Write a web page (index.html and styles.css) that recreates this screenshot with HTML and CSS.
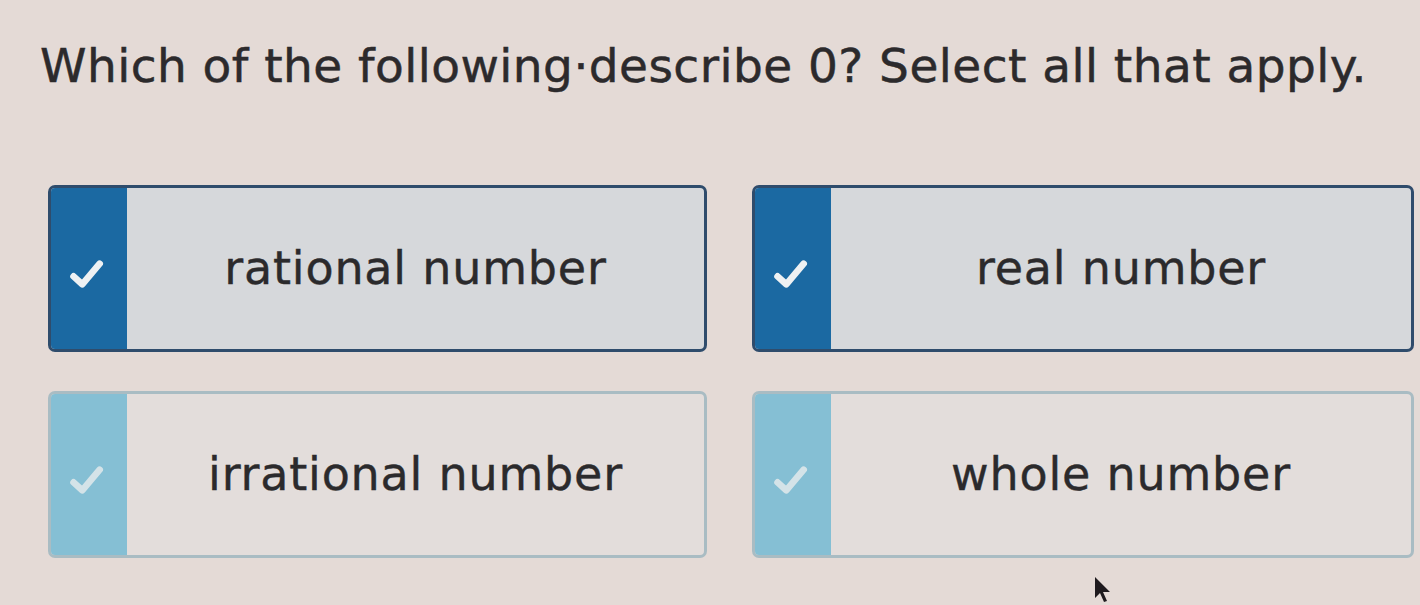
FILE: index.html
```html
<!DOCTYPE html>
<html lang="en">
<head>
<meta charset="utf-8">
<title>Select all that apply</title>
<link rel="stylesheet" href="styles.css">
</head>
<body>
<main class="page">
  <h1 class="question">Which of the following·describe 0? Select all that apply.</h1>
  <div class="options">
    <div class="option selected">
      <div class="mark"><svg viewBox="0 0 24 24" class="check"><path d="M3.5 13.5 L9 18.5 L20 5.5" /></svg></div>
      <div class="label">rational number</div>
    </div>
    <div class="option selected">
      <div class="mark"><svg viewBox="0 0 24 24" class="check"><path d="M3.5 13.5 L9 18.5 L20 5.5" /></svg></div>
      <div class="label">real number</div>
    </div>
    <div class="option">
      <div class="mark"><svg viewBox="0 0 24 24" class="check"><path d="M3.5 13.5 L9 18.5 L20 5.5" /></svg></div>
      <div class="label">irrational number</div>
    </div>
    <div class="option">
      <div class="mark"><svg viewBox="0 0 24 24" class="check"><path d="M3.5 13.5 L9 18.5 L20 5.5" /></svg></div>
      <div class="label">whole number</div>
    </div>
  </div>
  <svg class="cursor" viewBox="0 0 20 28"><path d="M1 1 L1 22 L6 17 L10 26 L13 25 L9 16 L16 16 Z" /></svg>
</main>
</body>
</html>
```
FILE: styles.css
```css
html, body {
  margin: 0;
  padding: 0;
  background: #e4dad6;
}
.page {
  position: relative;
  width: 1420px;
  height: 605px;
  overflow: hidden;
  box-sizing: border-box;
  padding: 36px 0 0 48px;
  font-family: "DejaVu Sans", Verdana, sans-serif;
  color: #2b2a2c;
}
.question {
  margin: 0 0 0 -8px;
  font-size: 47px;
  font-weight: normal;
  letter-spacing: 0.45px;
  line-height: 60px;
  color: #2c2a2c;
  -webkit-text-stroke: 0.5px #2c2a2c;
  white-space: nowrap;
}
.options {
  margin-top: 89px;
  display: grid;
  grid-template-columns: 659px 662px;
  grid-auto-rows: 167px;
  column-gap: 45px;
  row-gap: 39px;
}
.option {
  display: flex;
  border: 3px solid #a9bcc3;
  border-radius: 7px;
  background: #e3dddb;
  overflow: hidden;
}
.option.selected {
  border-color: #2f4c6c;
  background: #d6d8db;
}
.mark {
  width: 76px;
  flex: none;
  display: flex;
  align-items: center;
  justify-content: center;
  background: #85bfd4;
}
.selected .mark {
  background: #1b69a2;
}
.check {
  width: 38px;
  height: 38px;
  margin-top: 10px;
  margin-right: 4px;
}
.check path {
  fill: none;
  stroke: #d4e3e8;
  stroke-width: 4.2;
  stroke-linecap: round;
  stroke-linejoin: round;
}
.selected .check path {
  stroke: #eef1f3;
}
.label {
  flex: 1;
  display: flex;
  align-items: center;
  justify-content: center;
  font-size: 46px;
  letter-spacing: 0.8px;
  color: #2b2a2c;
  -webkit-text-stroke: 0.4px #2b2a2c;
  padding-bottom: 2px;
}
.cursor {
  position: absolute;
  left: 1094px;
  top: 576px;
  width: 20px;
  height: 28px;
}
.cursor path {
  fill: #1e1a1e;
}
```
